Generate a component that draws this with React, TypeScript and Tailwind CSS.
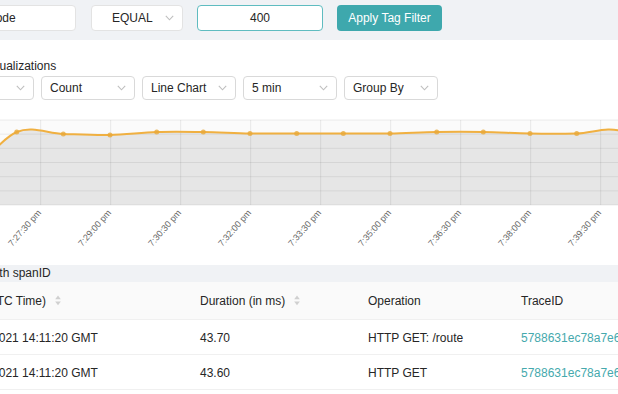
import React from 'react';

const Chevron = () => (
  <svg width="9" height="6" viewBox="0 0 9 6" className="shrink-0">
    <polyline points="0.8,0.8 4.5,4.8 8.2,0.8" fill="none" stroke="#bfbfbf" strokeWidth="1.1" />
  </svg>
);

const SortIcon = () => (
  <svg width="6" height="11" viewBox="0 0 6 11" className="shrink-0">
    <polygon points="3,0.5 5.8,4.2 0.2,4.2" fill="#d0d0d0" />
    <polygon points="0.2,6.6 5.8,6.6 3,10.3" fill="#d0d0d0" />
  </svg>
);

const Select = ({ label }: { label: string }) => (
  <div className="w-[94px] h-[24px] shrink-0 bg-white border border-[#d9d9d9] rounded-[4px] flex items-center justify-between pl-[8px] pr-[8px]">
    <span className="whitespace-nowrap">{label}</span>
    <Chevron />
  </div>
);

// chart geometry (page px)
const TOP = 20;
const BOTTOM = 105;
const pts: [number, number][] = [
  [-76.6, 190], [-30, 172], [16.7, 132], [63.3, 134], [110, 135], [156.7, 132], [203.3, 132],
  [250, 133.5], [296.7, 133.5], [343.3, 133.5], [390, 133.5], [436.7, 132], [483.3, 132],
  [530, 133.5], [576.7, 133.5], [623.3, 132], [670, 172], [716.6, 190],
].map(([x, y]) => [x, y - 100] as [number, number]);

function curve(p: [number, number][]) {
  let d = `M${p[0][0]},${p[0][1]}`;
  for (let i = 0; i < p.length - 1; i++) {
    const p0 = p[Math.max(0, i - 1)];
    const p1 = p[i];
    const p2 = p[i + 1];
    const p3 = p[Math.min(p.length - 1, i + 2)];
    const c1x = p1[0] + (p2[0] - p0[0]) / 6;
    const c1y = p1[1] + (p2[1] - p0[1]) / 6;
    const c2x = p2[0] - (p3[0] - p1[0]) / 6;
    const c2y = p2[1] - (p3[1] - p1[1]) / 6;
    d += ` C${c1x},${c1y} ${c2x},${c2y} ${p2[0]},${p2[1]}`;
  }
  return d;
}

const linePath = curve(pts);
const areaPath = `${linePath} L${pts[pts.length - 1][0]},${BOTTOM} L${pts[0][0]},${BOTTOM} Z`;
const labels = ['7:27:30 pm', '7:29:00 pm', '7:30:30 pm', '7:32:00 pm', '7:33:30 pm', '7:35:00 pm', '7:36:30 pm', '7:38:00 pm', '7:39:30 pm'];

const Chart = () => (
  <svg width="618" height="162" className="block">
    <rect x="0" y={TOP} width="618" height={BOTTOM - TOP} fill="#fbfbfb" />
    <path d={areaPath} fill="#e6e6e6" />
    {Array.from({ length: 7 }).map((_, i) => (
      <line key={i} x1="0" x2="618" y1={TOP + i * 14.17} y2={TOP + i * 14.17} stroke="#000" strokeOpacity="0.07" />
    ))}
    {labels.map((l, i) => {
      const x = 40.7 + i * 70;
      return (
        <g key={l}>
          <line x1={x} x2={x} y1={TOP} y2={BOTTOM} stroke="#000" strokeOpacity="0.08" />
          <text
            x={x + 1}
            y={113}
            transform={`rotate(-49 ${x + 1} 113)`}
            textAnchor="end"
            fontSize="9"
            fill="#666"
            fontFamily="Liberation Sans, Arial, sans-serif"
          >
            {l}
          </text>
        </g>
      );
    })}
    <path d={linePath} fill="none" stroke="#f0b041" strokeWidth="2" />
    {pts.slice(2, 15).map(([x, y]) => (
      <circle key={x} cx={x} cy={y} r="2.5" fill="#e8a93a" fillOpacity="0.8" />
    ))}
  </svg>
);

export default function App() {
  return (
    <div className="w-[618px] h-[394px] overflow-hidden bg-white font-['Liberation_Sans',Arial,sans-serif] text-[12px] text-[#262626]">
      {/* tag filter bar */}
      <div className="h-[40px] bg-[#f0f2f5] pt-[5px]">
        <div className="-ml-[25px] flex items-start">
          <div className="w-[101px] h-[26px] shrink-0 bg-white border border-[#e3e3e3] rounded-[4px] pl-[11px] leading-[24px] whitespace-nowrap">
            Code
          </div>
          <div className="ml-[15px] w-[92px] h-[26px] shrink-0 bg-white border border-[#e3e3e3] rounded-[4px] flex items-center justify-between pl-[20px] pr-[8px]">
            <span>EQUAL</span>
            <Chevron />
          </div>
          <div className="ml-[14px] w-[126px] h-[26px] shrink-0 bg-white border border-[#5fbcc0] rounded-[4px] leading-[24px] text-center">
            400
          </div>
          <button className="ml-[14px] w-[105px] h-[26px] shrink-0 bg-[#3ea8ad] text-white rounded-[4px] leading-[26px] text-center">
            Apply Tag Filter
          </button>
        </div>
      </div>

      {/* visualizations */}
      <div className="-ml-[17px] mt-[18px] leading-[16px]">Visualizations</div>
      <div className="-ml-[60px] mt-[2px] flex gap-[7px]">
        <Select label="Calls" />
        <Select label="Count" />
        <Select label="Line Chart" />
        <Select label="5 min" />
        <Select label="Group By" />
      </div>

      <Chart />

      {/* spans table */}
      <div className="mt-[3px] h-[17px] bg-[#f0f2f5] leading-[17px]">
        <span className="-ml-[12px] inline-block">with spanID</span>
      </div>
      <div className="-ml-[90px]">
        <div className="flex h-[38px] items-center bg-[#fafafa] border-b border-[#f0f0f0]">
          <div className="w-[274px] shrink-0 pl-[16px] flex items-center gap-[9px] whitespace-nowrap">
            <span>Start Time (UTC Time)</span>
            <SortIcon />
          </div>
          <div className="w-[168px] shrink-0 pl-[16px] flex items-center gap-[9px] whitespace-nowrap">
            <span>Duration (in ms)</span>
            <SortIcon />
          </div>
          <div className="w-[153px] shrink-0 pl-[16px] whitespace-nowrap">Operation</div>
          <div className="shrink-0 pl-[16px] whitespace-nowrap">TraceID</div>
        </div>
        {[
          ['Thu, 20 May 2021 14:11:20 GMT', '43.70', 'HTTP GET: /route'],
          ['Thu, 20 May 2021 14:11:20 GMT', '43.60', 'HTTP GET'],
        ].map(([t, d, op], i) => (
          <div key={i} className="flex h-[35px] items-center pt-[2px] border-b border-[#f0f0f0] whitespace-nowrap">
            <div className="w-[274px] shrink-0 pl-[12px]">{t}</div>
            <div className="w-[168px] shrink-0 pl-[16px]">{d}</div>
            <div className="w-[153px] shrink-0 pl-[16px]">{op}</div>
            <div className="shrink-0 pl-[16px] text-[#45a9ad]">5788631ec78a7e6f2b1d</div>
          </div>
        ))}
      </div>
    </div>
  );
}
